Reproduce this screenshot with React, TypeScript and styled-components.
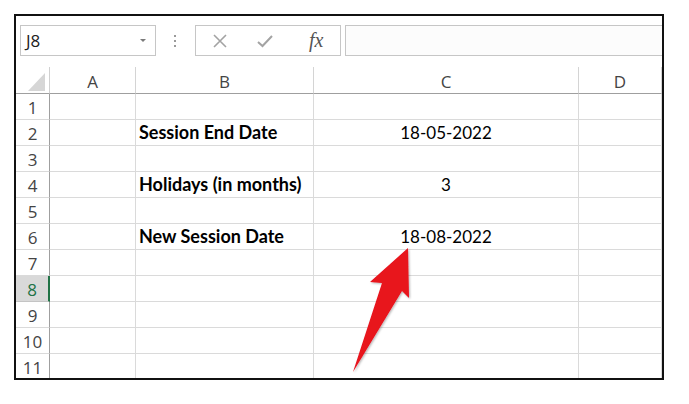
import React from 'react';
import styled, { createGlobalStyle } from 'styled-components';

const GlobalStyle = createGlobalStyle`
  html, body {
    margin: 0;
    padding: 0;
    background: #ffffff;
  }
  body {
    font-family: 'Open Sans', 'Noto Sans', sans-serif;
  }
`;

const COLUMNS = ['A', 'B', 'C', 'D'];
const ROW_COUNT = 11;
const SELECTED_ROW = 8;

const cells: Record<string, { text: string; bold?: boolean; center?: boolean }> = {
  B2: { text: 'Session End Date', bold: true },
  C2: { text: '18-05-2022', center: true },
  B4: { text: 'Holidays (in months)', bold: true },
  C4: { text: '3', center: true },
  B6: { text: 'New Session Date', bold: true },
  C6: { text: '18-08-2022', center: true },
};

const Page = styled.div`
  padding: 14px 0 0 14px;
`;

// the black outline around the whole sheet
const Frame = styled.div`
  position: relative;
  width: 650px;
  height: 366px;
  box-sizing: border-box;
  border: 2px solid #111;
  overflow: hidden;
  background: #fff;
`;

const Toolbar = styled.div`
  display: flex;
  align-items: center;
  height: 31px;
  margin: 9px 0 11px 4px;
`;

const NameBox = styled.div`
  display: flex;
  align-items: center;
  justify-content: space-between;
  box-sizing: border-box;
  width: 136px;
  height: 31px;
  padding: 0 9px 0 5px;
  border: 1px solid #c6c6c6;
  background: #fff;
  font-size: 17px;
  color: #222;
`;

const DropArrow = styled.span`
  width: 0;
  height: 0;
  border-left: 3px solid transparent;
  border-right: 3px solid transparent;
  border-top: 3px solid #7a7a7a;
`;

const Grip = styled.div`
  display: flex;
  flex-direction: column;
  gap: 3px;
  margin: 0 19px 0 18px;
`;

const GripDot = styled.span`
  width: 2px;
  height: 2px;
  background: #9a9a9a;
`;

const FunctionBox = styled.div`
  display: flex;
  align-items: center;
  box-sizing: border-box;
  width: 146px;
  height: 31px;
  padding: 0 0 0 17px;
  border: 1px solid #c6c6c6;
  background: #fff;
`;

const ToolIcon = styled.svg`
  flex: none;
  margin-right: 30px;
`;

const Fx = styled.span`
  font-family: 'Liberation Serif', 'DejaVu Serif', serif;
  font-style: italic;
  font-size: 20px;
  color: #555;
  margin-left: 6px;
`;

const FormulaBar = styled.div`
  flex: 1;
  box-sizing: border-box;
  height: 31px;
  margin-left: 4px;
  border: 1px solid #c6c6c6;
  border-right: none;
  background: #fcfcfc;
`;

const Sheet = styled.div`
  display: grid;
  grid-template-columns: 34px 86px 178px 265px 1fr;
  grid-template-rows: 27px;
  grid-auto-rows: 26px;
`;

const Corner = styled.div`
  display: flex;
  align-items: flex-end;
  justify-content: flex-end;
  box-sizing: border-box;
  padding: 0 4px 2px 0;
  border-bottom: 1px solid #9f9f9f;
  border-right: 1px solid #d0d0d0;
`;

const CornerTriangle = styled.span`
  width: 17px;
  height: 18px;
  background: #d6d6d6;
  clip-path: polygon(100% 0, 100% 100%, 0 100%);
`;

const ColumnHeader = styled.div`
  display: flex;
  align-items: center;
  justify-content: center;
  box-sizing: border-box;
  padding-top: 3px;
  border-bottom: 1px solid #9f9f9f;
  border-right: 1px solid #d4d4d4;
  font-size: 17px;
  color: #444;
`;

const RowHeader = styled.div<{ $selected?: boolean }>`
  display: flex;
  align-items: center;
  justify-content: center;
  box-sizing: border-box;
  padding-top: 1px;
  border-bottom: 1px solid ${(p) => (p.$selected ? '#c4c4c4' : '#dadada')};
  border-right: ${(p) => (p.$selected ? '2px solid #217346' : '1px solid #9f9f9f')};
  background: ${(p) => (p.$selected ? '#d9d9d9' : '#fff')};
  font-size: 17px;
  color: ${(p) => (p.$selected ? '#217346' : '#444')};
`;

const Cell = styled.div<{ $bold?: boolean; $center?: boolean }>`
  display: flex;
  align-items: flex-end;
  justify-content: ${(p) => (p.$center ? 'center' : 'flex-start')};
  box-sizing: border-box;
  padding: 0 3px 2px;
  border-bottom: 1px solid #dadada;
  border-right: 1px solid #dadada;
  font-family: 'Lato', 'Open Sans', sans-serif;
  font-size: ${(p) => (p.$bold ? '18px' : '17px')};
  font-weight: ${(p) => (p.$bold ? 700 : 400)};
  color: #000;
  white-space: nowrap;
`;

// callout arrow drawn on top of the grid
const Callout = styled.svg`
  position: absolute;
  left: 0;
  top: 0;
  width: 646px;
  height: 362px;
  pointer-events: none;
`;

const App: React.FC = () => {
  const rows = Array.from({ length: ROW_COUNT }, (_, i) => i + 1);

  return (
    <Page>
      <GlobalStyle />
      <Frame>
        <Toolbar>
          <NameBox>
            J8
            <DropArrow />
          </NameBox>
          <Grip>
            <GripDot />
            <GripDot />
            <GripDot />
          </Grip>
          <FunctionBox>
            <ToolIcon width="14" height="14" viewBox="0 0 14 14">
              <path d="M1 1 L13 13 M13 1 L1 13" stroke="#a3a3a3" strokeWidth="1.6" fill="none" />
            </ToolIcon>
            <ToolIcon width="16" height="14" viewBox="0 0 16 14">
              <path d="M1 8 L5.5 12 L15 2" stroke="#a3a3a3" strokeWidth="2" fill="none" />
            </ToolIcon>
            <Fx>fx</Fx>
          </FunctionBox>
          <FormulaBar />
        </Toolbar>

        <Sheet>
          <Corner>
            <CornerTriangle />
          </Corner>
          {COLUMNS.map((col) => (
            <ColumnHeader key={col}>{col}</ColumnHeader>
          ))}
          {rows.map((row) => (
            <React.Fragment key={row}>
              <RowHeader $selected={row === SELECTED_ROW}>{row}</RowHeader>
              {COLUMNS.map((col) => {
                const cell = cells[`${col}${row}`];
                return (
                  <Cell key={col} $bold={cell?.bold} $center={cell?.center}>
                    {cell?.text}
                  </Cell>
                );
              })}
            </React.Fragment>
          ))}
        </Sheet>

        <Callout viewBox="16 16 646 362">
          <defs>
            <filter id="shadow" x="-30%" y="-10%" width="160%" height="130%">
              <feDropShadow dx="1" dy="1" stdDeviation="1.2" floodColor="#000" floodOpacity="0.3" />
            </filter>
          </defs>
          <polygon
            points="408,248 409,298 402,291 353,372 382,283 370,282"
            fill="#e8121e"
            filter="url(#shadow)"
          />
        </Callout>
      </Frame>
    </Page>
  );
};

export default App;
